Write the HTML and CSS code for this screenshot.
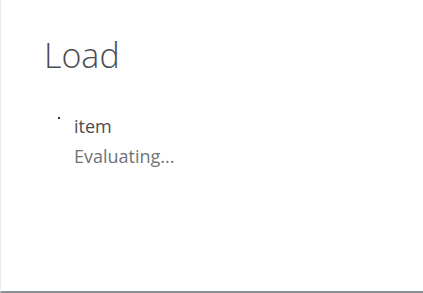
FILE: index.html
```html
<!DOCTYPE html>
<html lang="en">
<head>
    <meta charset="UTF-8">
    <meta name="viewport" content="width=device-width, initial-scale=1.0">
    <title>Load</title>
    <link rel="stylesheet" href="styles.css">
</head>
<body>
    <div class="panel">
        <h1 class="title">Load</h1>
        <ul class="items">
            <li>
                <div class="item-name">item</div>
                <div class="item-status">Evaluating...</div>
            </li>
        </ul>
    </div>
</body>
</html>
```

FILE: styles.css
```css
html, body {
    margin: 0;
    height: 100%;
}
body {
    font-family: "Open Sans", "Noto Sans", sans-serif;
    background: #fff;
    box-sizing: border-box;
    border-left: 1px solid #ececec;
    border-bottom: 2px solid #8a8d90;
}
.panel {
    padding: 31px 0 0 43px;
}
.title {
    margin: 0;
    font-size: 34px;
    font-weight: 300;
    color: #4a4d52;
    line-height: 48px;
}
.items {
    margin: 32px 0 0 0;
    padding-left: 30px;
    list-style: none;
}
.items li {
    position: relative;
}
.items li::before {
    content: "";
    position: absolute;
    left: -16px;
    top: 6px;
    width: 2px;
    height: 2px;
    background: #333;
}
.item-name {
    font-size: 18px;
    color: #4c4c4c;
    line-height: 30px;
}
.item-status {
    font-size: 18px;
    color: #707377;
    line-height: 30px;
}
```
